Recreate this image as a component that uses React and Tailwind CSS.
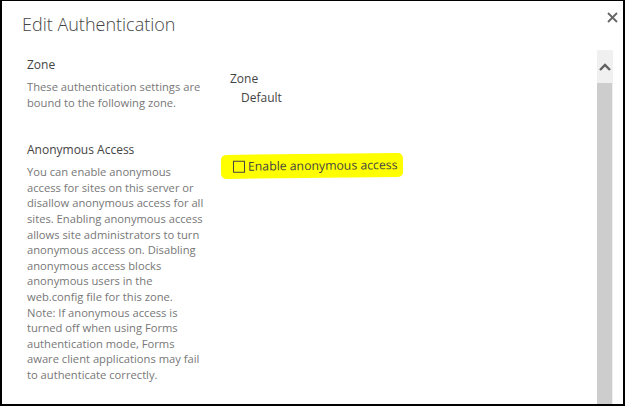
import React from "react";

const font = { fontFamily: '"Open Sans", "Noto Sans", sans-serif' };

const zoneLines = ["These authentication settings are", "bound to the following zone."];

const anonLines = [
  "You can enable anonymous",
  "access for sites on this server or",
  "disallow anonymous access for all",
  "sites. Enabling anonymous access",
  "allows site administrators to turn",
  "anonymous access on. Disabling",
  "anonymous access blocks",
  "anonymous users in the",
  "web.config file for this zone.",
  "Note: If anonymous access is",
  "turned off when using Forms",
  "authentication mode, Forms",
  "aware client applications may fail",
  "to authenticate correctly.",
];

function CloseIcon() {
  return (
    <svg width="11" height="11" viewBox="0 0 11 11" className="block">
      <path d="M1 1 L10 10 M10 1 L1 10" stroke="#666" strokeWidth="1.8" fill="none" />
    </svg>
  );
}

function Scrollbar() {
  return (
    <div className="w-[16px] flex flex-col bg-[#f0f0f0]">
      <div className="h-[33px] flex items-center justify-center">
        <svg width="12" height="8" viewBox="0 0 12 8" className="block">
          <path d="M1 7 L6 2 L11 7" stroke="#606060" strokeWidth="2.4" fill="none" />
        </svg>
      </div>
      <div className="flex-1 bg-[#cdcdcd] mr-[1px]" />
    </div>
  );
}

function Section({ title, lines, children }) {
  return (
    <div className="flex">
      <div className="w-[203px] shrink-0">
        <div className="text-[12px] leading-[18px] text-[#444]">{title}</div>
        <div className="mt-[5px] text-[11.2px] leading-[15.6px] text-[#777] whitespace-nowrap">
          {lines.map((l) => (
            <div key={l}>{l}</div>
          ))}
        </div>
      </div>
      <div className="flex-1">{children}</div>
    </div>
  );
}

export default function App() {
  return (
    <div
      className="w-[625px] h-[406px] bg-white border-black border-t border-l-2 border-r-2 border-b-2 flex flex-col overflow-hidden"
      style={font}
    >
      <div className="h-[49px] shrink-0 flex items-start justify-between">
        <h1 className="ml-[20px] mt-[11px] text-[18px] leading-[24px] font-light text-[#444]">
          Edit Authentication
        </h1>
        <button className="mt-[11px] mr-[5px] w-[11px] h-[11px] flex items-center justify-center">
          <CloseIcon />
        </button>
      </div>

      <div className="flex-1 flex min-h-0">
        <div className="flex-1 pl-[25px] pt-[6px] flex flex-col gap-[31px]">
          <Section title="Zone" lines={zoneLines}>
            <div className="mt-[13px] text-[12px] leading-[19px] text-[#444]">
              <div>Zone</div>
              <div className="pl-[11px]">Default</div>
            </div>
          </Section>

          <Section title="Anonymous Access" lines={anonLines}>
            <div className="mt-[13px] -ml-[9px] inline-flex items-center bg-[#ffff00] pl-[12px] pr-[6px] py-[4px] rounded-[5px] -rotate-[0.6deg]">
              <span className="w-[12px] h-[12px] border border-[#444] mr-[3px]" />
              <span className="text-[12.25px] leading-[16px] text-[#444]">Enable anonymous access</span>
            </div>
          </Section>
        </div>
        <Scrollbar />
        <div className="w-[10px]" />
      </div>
    </div>
  );
}
